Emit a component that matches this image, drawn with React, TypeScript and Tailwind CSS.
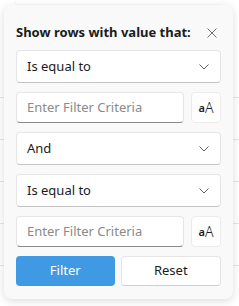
import React from 'react';

const font = { fontFamily: '"Noto Sans", "Open Sans", sans-serif' };

const Chevron = () => (
  <svg width="10" height="6" viewBox="0 0 10 6" fill="none" className="text-[#5f5f5f]">
    <path d="M0.5 0.5L5 5L9.5 0.5" stroke="currentColor" strokeWidth="1" />
  </svg>
);

const Select: React.FC<{ label: string }> = ({ label }) => (
  <div className="flex h-[33px] items-center justify-between rounded-[4px] border border-[#e5e5e5] border-b-[#c4c4c4] bg-white pl-[10px] pr-[11px] text-[13px] text-[#1b1b1b]">
    <span>{label}</span>
    <Chevron />
  </div>
);

const FilterInput = () => (
  <div className="flex h-[31px] gap-[7px]">
    <div className="flex flex-1 items-center rounded-[4px] border border-[#e5e5e5] border-b-[#8a8a8a] bg-white pl-[10px] text-[13px] text-[#8a8a8a]">
      Enter Filter Criteria
    </div>
    <div className="flex w-[30px] items-center justify-center rounded-[4px] border border-[#ececec] bg-white text-[#1b1b1b]">
      <span className="text-[11px] font-semibold leading-none">a</span>
      <span className="text-[14px] font-light leading-none">A</span>
    </div>
  </div>
);

export default function App() {
  return (
    <div className="relative h-[306px] w-[239px] overflow-hidden bg-white" style={font}>
      {/* rows behind the popup */}
      <div className="absolute left-[16px] top-0 h-[4px] w-[206px] bg-white shadow-[0_0_2px_rgba(0,0,0,0.08)]" />
      <div className="flex flex-col pt-[97px]">
        {[0, 1, 2, 3, 4].map((i) => (
          <div key={i} className="h-[42px] border-t border-[#e6e6e6]" />
        ))}
      </div>

      <div className="absolute left-[4px] top-[5px] flex w-[229px] flex-col rounded-[8px] bg-[#f9f9f9] px-[12px] pb-[13px] pt-[20px] shadow-[0_2px_8px_rgba(0,0,0,0.14)]">
        <div className="mb-[9px] flex h-[16px] items-center justify-between">
          <span className="text-[13px] font-bold text-[#1b1b1b]">Show rows with value that:</span>
          <svg width="10" height="10" viewBox="0 0 10 10" className="mr-[4px] text-[#6e6e6e]">
            <path d="M0.5 0.5L9.5 9.5M9.5 0.5L0.5 9.5" stroke="currentColor" strokeWidth="1" />
          </svg>
        </div>
        <div className="flex flex-col gap-[9px]">
          <Select label="Is equal to" />
          <FilterInput />
          <Select label="And" />
          <Select label="Is equal to" />
          <FilterInput />
          <div className="flex h-[30px] gap-[6px]">
            <button className="flex-1 rounded-[4px] bg-[#3f9ae3] text-[13px] text-white">Filter</button>
            <button className="flex-1 rounded-[4px] border border-[#e5e5e5] border-b-[#cfcfcf] bg-white text-[13px] text-[#1b1b1b]">
              Reset
            </button>
          </div>
        </div>
      </div>
    </div>
  );
}
